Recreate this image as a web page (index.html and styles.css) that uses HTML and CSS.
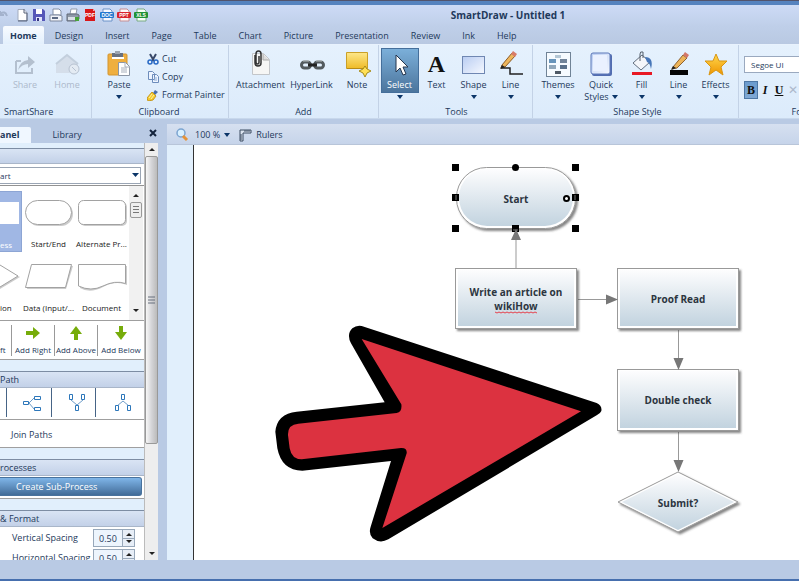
FILE: index.html
```html
<!DOCTYPE html>
<html lang="en">
<head>
<meta charset="utf-8">
<title>SmartDraw - Untitled 1</title>
<link rel="stylesheet" href="styles.css">
</head>
<body>
<div class="window">
  <header class="titlebar">
    <div class="quickbar">
      <button class="quick quick-cut" aria-label="Undo"><svg width="10" height="14"><path d="M0 6Q5 2 7 8M0 3v4h4" fill="none" stroke="#a3b2cc" stroke-width="2"/></svg></button>
      <button class="quick" aria-label="New"><svg width="14" height="14"><path d="M3 1.500h6l3 3v8H3z" fill="#fff" stroke="#a2abbd"/><path d="M9 1v4h3M12 5v8H3" fill="none" stroke="#566179"/></svg></button>
      <button class="quick" aria-label="Save"><svg width="14" height="14"><path d="M1 1h10l2 2v10H1z" fill="#5557b8"/><path d="M4 1h6v5H4z" fill="#fff"/><path d="M4 9h6v4H4z" fill="#dfe3fb"/><path d="M5 10h2v3H5z" fill="#34357e"/></svg></button>
      <button class="quick" aria-label="Print preview"><svg width="14" height="14"><path d="M4 1h6l2 2v4H4z" fill="#fff" stroke="#8390a6"/><path d="M1 7h9l3 1v5H1z" fill="#f1f3f8" stroke="#7c879d"/><path d="M3 10h6" stroke="#5d6b85" stroke-width="2"/></svg></button>
      <button class="quick" aria-label="Print"><svg width="14" height="14"><path d="M5 1h6l-1 5H4z" fill="#fff" stroke="#929bab"/><path d="M1 6h10l2 1v4l-3 2H1z" fill="#8f99a8" stroke="#626b79"/><path d="M2 9h7v3H2z" fill="#d9dfe7"/><path d="M9 9h4v4H9z" fill="#48a338"/></svg></button>
      <button class="quick" aria-label="Export PDF"><svg width="14" height="14"><path d="M2 1h8l2 2v10H2z" fill="#d91618"/><path d="M10 1v2h2" fill="#f7aaaa"/><text x="7" y="9" class="tag">PDF</text></svg></button>
      <button class="quick" aria-label="Export DOC"><svg width="14" height="14"><path d="M3 1h7l2 2v10H3z" fill="#f5f9ff" stroke="#6a91c7"/><rect y="4" width="14" height="6" rx="1" fill="#2379cf"/><text x="7" y="9" class="tag">DOC</text></svg></button>
      <button class="quick" aria-label="Export PPT"><svg width="14" height="14"><path d="M3 1h7l2 2v10H3z" fill="#fff7f7" stroke="#c48d93"/><rect y="4" width="14" height="6" rx="1" fill="#d9242c"/><text x="7" y="9" class="tag">PPT</text></svg></button>
      <button class="quick" aria-label="Export XLS"><svg width="14" height="14"><path d="M3 1h7l2 2v10H3z" fill="#f6fff6" stroke="#79a984"/><rect y="4" width="14" height="6" rx="1" fill="#219235"/><text x="7" y="9" class="tag">XLS</text></svg></button>
    </div>
    <h1 class="title">SmartDraw - Untitled 1</h1>
  </header>

  <nav class="tabs">
    <button class="tab tab-active">Home</button>
    <button class="tab">Design</button>
    <button class="tab">Insert</button>
    <button class="tab">Page</button>
    <button class="tab">Table</button>
    <button class="tab">Chart</button>
    <button class="tab">Picture</button>
    <button class="tab">Presentation</button>
    <button class="tab">Review</button>
    <button class="tab">Ink</button>
    <button class="tab">Help</button>
  </nav>

  <div class="ribbon">
    <section class="group group-share">
      <div class="tools">
        <button class="tool mid" disabled><svg width="28" height="28"><path d="M5 11H5v12h16v-5M5 11h5" fill="none" stroke="#b4c0cf" stroke-width="2"/><path d="M7 20Q9 11 17 10V6l7 6-7 6v-4Q11 14 7 20z" fill="#b4c0cf"/></svg>Share</button>
        <button class="tool mid" disabled><svg width="28" height="28"><path d="M3 14L14 5l11 9v9H3z" fill="#d5deea"/><path d="M3 14L14 5l11 9" fill="none" stroke="#c3cfdd" stroke-width="2"/><circle cx="21" cy="19" r="5" fill="#e4ebf3" stroke="#b7c2d1"/><path d="M19 17l4 4" stroke="#b7c2d1"/></svg>Home</button>
      </div>
      <h2>SmartShare</h2>
    </section>
    <section class="group group-clipboard">
      <div class="tools">
        <button class="tool mid"><svg width="28" height="28"><rect x="3" y="4" width="19" height="21" rx="1" fill="#efaf3f" stroke="#d39530"/><rect x="7" y="3" width="11" height="4" fill="#687180"/><path d="M10 1h5v3h-5z" fill="#9ca5b2"/><path d="M7 7h12v2H7z" fill="#fff"/><path d="M13.500 12.500h7l4 4v9h-11z" fill="#fff" stroke="#8c96a5"/><path d="M20 12v5h5M16 18h6M16 20h6M16 22h6" fill="none" stroke="#a7afbb"/></svg>Paste<i class="caret"></i></button>
        <div class="stack">
          <button class="line-tool"><svg width="12" height="12"><path d="M3 1l4 7M9 1L5 8" stroke="#39496a" stroke-width="2"/><circle cx="3" cy="9" r="2" fill="none" stroke="#2869c5" stroke-width="1.500"/><circle cx="9" cy="9" r="2" fill="none" stroke="#2869c5" stroke-width="1.500"/></svg>Cut</button>
          <button class="line-tool"><svg width="12" height="12"><path d="M1.500.500h4l2 2v6h-6zM5.500 3.500h4l2 2v6h-6z" fill="#edf4ff" stroke="#6d8cbb"/><path d="M7 7h3M7 9h3" stroke="#93aed4"/></svg>Copy</button>
          <button class="line-tool"><svg width="12" height="12"><path d="M8 1l3 2-3 3-2-2z" fill="#4b6fa8"/><path d="M5 3l4 4-3 4-5 1-1-3z" fill="#f5c92c" stroke="#c79a1f"/><path d="M2 9l3-4M4 10l3-4" stroke="#fff3a6"/></svg>Format Painter</button>
        </div>
      </div>
      <h2>Clipboard</h2>
    </section>
    <section class="group group-add">
      <div class="tools">
        <button class="tool wide"><svg width="28" height="28"><path d="M5.500 3.500h11l6 6v15h-17z" fill="#f6f6f5" stroke="#c3c6ca"/><path d="M16 4v6h6" fill="#ddd" stroke="#aaa"/><path d="M8 5v8q0 3 3 3t3-3V4q0-3-2.500-3T9 4v8q0 2 1.500 2t1.500-2V6" fill="none" stroke="#333" stroke-width="1.500"/></svg>Attachment</button>
        <button class="tool wide"><svg width="28" height="28"><rect x="3.500" y="12" width="9" height="6" rx="3" fill="none" stroke="#535a5e" stroke-width="3"/><rect x="16.500" y="12" width="9" height="6" rx="3" fill="none" stroke="#535a5e" stroke-width="3"/><path d="M10 15h9" stroke="#222" stroke-width="3"/><path d="M5 11h6M18 11h6" stroke="#b8bebf"/></svg>HyperLink</button>
        <button class="tool slim"><svg width="28" height="28"><defs><linearGradient id="note" x2="0" y2="1"><stop stop-color="#fde78a"/><stop offset="1" stop-color="#efbb27"/></linearGradient></defs><path d="M3.500 2.500h21v16h-21z" fill="url(#note)" stroke="#caa027"/><path d="M4 18h20v1H4z" fill="#b88b17"/><path d="M22 16l2 3 4 2-4 2-2 4-2-4-4-2 4-2z" fill="#ffe057" stroke="#a58a19"/></svg>Note</button>
      </div>
      <h2>Add</h2>
    </section>
    <section class="group group-tools">
      <div class="tools">
        <button class="tool narrow"><span class="face pressed"><svg width="28" height="28"><path d="M10 5v17l4-4 3 7 3-1-3-7h5z" fill="#fff" stroke="#24344c"/></svg>Select</span><i class="caret"></i></button>
        <button class="tool narrow"><span class="letter">A</span>Text</button>
        <button class="tool narrow"><svg width="28" height="28"><defs><linearGradient id="box" x2="1" y2="1"><stop stop-color="#b9cdf2"/><stop offset="1" stop-color="#f6f9ff"/></linearGradient></defs><rect x="2.500" y="6.500" width="22" height="17" fill="url(#box)" stroke="#6f87b2"/></svg>Shape<i class="caret"></i></button>
        <button class="tool narrow"><svg width="28" height="28"><path d="M5 15L15 3l3 3L8 17l-4 1z" fill="#eeb65c" stroke="#8d5b25"/><path d="M14 4l2-3 4 3-2 3z" fill="#d77b68"/><path d="M4 18h9v6h13" fill="none" stroke="#222" stroke-width="1.500"/><path d="M5 15l3 2-5 2z" fill="#222"/></svg>Line<i class="caret"></i></button>
      </div>
      <h2>Tools</h2>
    </section>
    <section class="group group-style">
      <div class="tools">
        <button class="tool mid"><svg width="28" height="28"><rect x="2.500" y="2.500" width="24" height="24" fill="#f6fbff" stroke="#708396"/><path d="M11 5h6v3h-6z" fill="#b4c7d5"/><path d="M5 9h7v4H5z" fill="#6794ba"/><path d="M16 9h7v4h-7z" fill="#71849a"/><path d="M5 15h7v4H5z" fill="#90a7ba"/><path d="M16 15h7v4h-7z" fill="#5a718b"/><path d="M11 21h6v3h-6z" fill="#4e5965"/></svg>Themes<i class="caret"></i></button>
        <button class="tool roomy"><svg width="28" height="28"><rect x="5" y="4" width="20" height="22" rx="2" fill="#526db0"/><rect x="4" y="3" width="19" height="21" rx="2" fill="url(#box)" stroke="#5d78b9"/><path d="M6 5h14v16H6z" fill="#eaf1ff"/></svg>Quick<span class="sub">Styles <i class="caret"></i></span></button>
        <button class="tool narrow"><svg width="28" height="28"><path d="M5 13L14 5l8 7-9 8z" fill="#f4f6fa" stroke="#636f80"/><path d="M12 11V4q0-3 3-2v6" fill="none" stroke="#555e6b"/><path d="M17 7q9 0 6 12-1-6-4-7z" fill="#4776b8"/><path d="M4 22h20v3H4z" fill="#e81824"/></svg>Fill<i class="caret"></i></button>
        <button class="tool narrow"><svg width="28" height="28"><path d="M8 17L18 5l4 3-10 10-5 1z" fill="#edb459" stroke="#8e612f"/><path d="M18 5l2-3 4 3-2 3z" fill="#d37769"/><path d="M8 16l3 2-5 2z" fill="#222"/><path d="M5 20h18v5H5z" fill="#060606"/></svg>Line<i class="caret"></i></button>
        <button class="tool narrow"><svg width="28" height="28"><defs><linearGradient id="star" x2="0" y2="1"><stop stop-color="#ffd84e"/><stop offset="1" stop-color="#ef9500"/></linearGradient></defs><path d="M14 4l3 7h8l-6 6 2 8-7-5-7 5 2-8-6-6h8z" fill="url(#star)" stroke="#d99613"/></svg>Effects<i class="caret"></i></button>
      </div>
      <h2>Shape Style</h2>
    </section>
    <section class="group group-font">
      <div class="font-tools">
        <input class="font-name" aria-label="Font" value="Segoe UI">
        <div class="font-row">
          <button class="fmt fmt-on"><b>B</b></button>
          <button class="fmt"><b><em>I</em></b></button>
          <button class="fmt"><b><u>U</u></b></button>
          <button class="fmt fmt-off">✕</button>
        </div>
      </div>
      <h2>Font</h2>
    </section>
  </div>

  <main class="work">
    <aside class="side">
      <div class="side-tabs">
        <button class="side-tab side-on">anel</button>
        <button class="side-tab">Library</button>
        <button class="close" aria-label="Close panel"><svg width="8" height="8"><path d="M1 1l6 6M7 1L1 7" stroke="#14243d" stroke-width="2"/></svg></button>
      </div>
      <div class="side-body">
        <div class="side-content">
          <div class="head head-first"></div>
          <div class="picker">
            <select aria-label="Library"><option>art</option></select>
            <svg class="picker-arrow" width="7" height="4"><path d="M0 0h7L3.500 4z" fill="#0b3568"/></svg>
          </div>
          <div class="shapes">
            <div class="shape-grid">
              <button class="shape shape-on"><svg width="20" height="34"><path d="M0 5h19v22H0z" fill="#fff"/></svg>ess</button>
              <button class="shape"><svg width="52" height="34"><rect x="4" y="6" width="46" height="24" rx="12" class="soft"/><rect x="2.500" y="4.500" width="46" height="24" rx="12" class="sym"/></svg>Start/End</button>
              <button class="shape"><svg width="52" height="34"><rect x="4" y="6" width="47" height="24" rx="5" class="soft"/><rect x="2.500" y="4.500" width="47" height="24" rx="5" class="sym"/></svg>Alternate Pr...</button>
              <button class="shape"><svg width="20" height="34"><path d="M0 7l20 10L0 29" class="soft"/><path d="M0 5l18 11L0 27" class="sym"/></svg>ion</button>
              <button class="shape"><svg width="52" height="34"><path d="M9 6h41l-7 23H4z" class="soft"/><path d="M8.500 4.500h40l-6 23h-40z" class="sym"/></svg>Data (Input/...</button>
              <button class="shape"><svg width="52" height="34"><path d="M4 6h47v19Q40 20 27 27T4 28z" class="soft"/><path d="M2.500 4.500h47v19Q39 20 27 26T2.500 26z" class="sym"/></svg>Document</button>
            </div>
            <div class="mini-scroll"><i class="up"></i><span class="mini-thumb"></span><i class="down"></i></div>
          </div>
          <div class="adds">
            <button class="add">ft</button>
            <button class="add"><svg width="16" height="16"><path d="M1 6h7V2l7 6-7 6v-4H1z" fill="#76ac0a"/></svg>Add Right</button>
            <button class="add"><svg width="16" height="16"><path d="M6 15V9H2l6-8 6 8h-4v6z" fill="#76ac0a"/></svg>Add Above</button>
            <button class="add"><svg width="16" height="16"><path d="M6 1v6H2l6 8 6-8h-4V1z" fill="#76ac0a"/></svg>Add Below</button>
          </div>
          <div class="head">Path</div>
          <div class="paths">
            <span class="path"></span>
            <button class="path" aria-label="Split right"><svg width="20" height="20"><path d="M7 10l5-5M7 10l5 6" class="wire"/><path d="M1.500 8.500h5v3h-5zM12.500 3.500h6v3h-6zM12.500 14.500h6v3h-6z" class="knot"/></svg></button>
            <button class="path" aria-label="Split up"><svg width="20" height="20"><path d="M10 12L4 7M10 12l6-5" class="wire"/><path d="M2.500 1.500h3v5h-3zM14.500 1.500h3v5h-3zM8.500 12.500h3v5h-3z" class="knot"/></svg></button>
            <button class="path" aria-label="Split down"><svg width="20" height="20"><path d="M10 8l-6 5M10 8l6 5" class="wire"/><path d="M8.500 1.500h3v5h-3zM2.500 12.500h3v5h-3zM14.500 12.500h3v5h-3z" class="knot"/></svg></button>
          </div>
          <button class="join">Join Paths</button>
          <div class="head">rocesses</div>
          <div class="sub-wrap"><button class="sub-process">Create Sub-Process</button></div>
          <div class="head">&amp; Format</div>
          <div class="spacing">
            <label class="space-row"><span>Vertical Spacing</span><input value="0.50"><span class="spin"><i class="up"></i><i class="down"></i></span></label>
            <label class="space-row"><span>Horizontal Spacing</span><input value="0.50"><span class="spin"><i class="up"></i><i class="down"></i></span></label>
          </div>
        </div>
        <div class="scroll"><span class="scroll-end"><i class="up"></i></span><span class="thumb"><svg width="7" height="8"><path d="M0 1h7M0 4h7M0 7h7" stroke="#666f7c"/></svg></span><span class="scroll-end scroll-low"><i class="down"></i></span></div>
      </div>
    </aside>

    <section class="doc">
      <div class="doc-bar">
        <svg width="14" height="14"><circle cx="6" cy="5" r="4" fill="#d8f0ff" stroke="#7ba4d0" stroke-width="1.500"/><path d="M8 8l4 4" stroke="#e59338" stroke-width="3"/></svg>
        <button class="bar-button">100 % <i class="caret"></i></button>
        <button class="bar-button"><svg width="13" height="13"><path d="M1 1h11v3H4v8H1z" fill="#dce4ef" stroke="#3b4a60"/><path d="M6 1v2M8 1v2M10 1v2M1 6h2M1 8h2M1 10h2" stroke="#3b4a60"/></svg>Rulers</button>
      </div>
      <div class="page">
        <svg class="diagram" width="605" height="415" viewBox="194 145 605 415">
          <defs>
            <linearGradient id="steel" x2="0" y2="1"><stop stop-color="#fdfdfe"/><stop offset="1" stop-color="#c2d3df"/></linearGradient>
            <filter id="shadow" x="-10%" y="-10%" width="125%" height="130%"><feDropShadow dx="2" dy="2" stdDeviation="1" flood-color="#444" flood-opacity=".65"/></filter>
          </defs>
          <g stroke="#999" fill="none"><path d="M516 269v-30M578 299.500h30M678.500 330v30M678.500 432v30"/></g>
          <g filter="url(#shadow)">
            <rect x="456.500" y="167.500" width="119" height="61" rx="30" fill="#fff" stroke="#999"/>
            <rect x="455.500" y="268.500" width="121" height="60" fill="#fff" stroke="#999"/>
            <rect x="617.500" y="268.500" width="121" height="60" fill="#fff" stroke="#999"/>
            <rect x="617.500" y="369.500" width="121" height="61" fill="#fff" stroke="#999"/>
            <path d="M678 472l60 30-60 30-60-30z" fill="#fff" stroke="#999"/>
          </g>
          <g fill="url(#steel)">
            <rect x="459" y="169" width="114" height="57" rx="28"/>
            <rect x="458" y="270" width="116" height="56"/>
            <rect x="620" y="270" width="116" height="56"/>
            <rect x="620" y="371" width="116" height="57"/>
            <path d="M678 474l56 28-56 28-56-28z"/>
          </g>
          <path d="M452 164h7v7h-7zM572 164h7v7h-7zM452 194h7v7h-7zM572 194h7v7h-7zM452 225h7v7h-7zM512 225h7v7h-7zM572 225h7v7h-7z"/>
          <path d="M516 229l-5 11h10zM618 299.500l-12-5v10zM678.500 370l-5-12h10zM678.500 472l-5-12h10z" fill="#777"/>
          <circle cx="515.500" cy="167.500" r="3.500"/>
          <circle cx="566.500" cy="198.500" r="2.500" fill="#fff" stroke="#000" stroke-width="2"/>
          <path d="M513 230h5M456 195v5M575 195v5" stroke="#777"/>
          <path d="M495 312l2 1 2-1 2 1 2-1 2 1 2-1 2 1 2-1 2 1 2-1 2 1 2-1 2 1 2-1 2 1 2-1 2 1 2-1 2 1 2-1 2 1" fill="none" stroke="#e6404c"/>
          <g class="node-text">
            <text x="516" y="203">Start</text>
            <text x="516" y="296">Write an article on</text>
            <text x="516" y="310">wikiHow</text>
            <text x="678" y="303">Proof Read</text>
            <text x="678" y="404">Double check</text>
            <text x="678" y="507">Submit?</text>
          </g>
          <g transform="translate(265 315) scale(.33333)">
            <path d="M290 33L995 264Q1012 272 1009 288 1006 296 995 301L370 673Q345 687 323 670 310 655 317 635L378 438 112 467Q50 467 37 400L31 350Q36 296 95 290L359 262 258 85Q244 58 262 40 274 30 290 33z"/>
            <path d="M290 72L948 289 352 639 425 415Q427 398 408 399L110 433Q80 433 74 400L69 360Q68 328 100 326L395 294Q412 290 409 268z" fill="#dc3240"/>
          </g>
        </svg>
      </div>
    </section>
  </main>
  <footer class="status"></footer>
</div>
</body>
</html>
```
FILE: styles.css
```css
* { box-sizing: border-box; }
body {
  margin: 0;
  font: 9px/12px "Open Sans", "Noto Sans", sans-serif;
  color: #1e395b;
}
button, input, select { font: inherit; color: inherit; }
button { background: none; border: 0; padding: 0; margin: 0; }
svg { display: block; flex: none; }
i { display: block; width: 0; height: 0; }
h1, h2 { margin: 0; }

.window {
  height: 100vh;
  display: flex;
  flex-direction: column;
  overflow: hidden;
  background: #b9cae4;
  border-top: 1px solid #52546c;
  border-bottom: 2px solid #466fae;
}
.titlebar {
  height: 25px;
  flex: none;
  display: flex;
  align-items: center;
  padding-bottom: 2px;
  border-top: 4px solid #5583bf;
  background: linear-gradient(#cddbf6, #bfcfe9);
}
.quickbar { display: flex; width: 217px; flex: none; }
.quick { width: 17px; display: flex; justify-content: center; }
.quick-cut { width: 13px; justify-content: flex-start; }
.tag { font: bold 5px "Liberation Sans", sans-serif; fill: #fff; text-anchor: middle; }
.title { flex: 1; text-align: center; font-size: 10px; font-weight: 700; }

.tabs { display: flex; height: 18px; flex: none; padding-left: 3px; background: linear-gradient(#bfcfe9, #b9c9e2); }
.tab { padding: 2px 11px 0; white-space: nowrap; }
.tab-active { padding: 2px 7px 0; background: linear-gradient(#f8fbff, #e3f0fd); border-radius: 2px 2px 0 0; font-weight: 700; }

.ribbon {
  display: flex;
  flex: none;
  height: 75px;
  background: linear-gradient(#e5f1fd, #dcebfb);
  border-top: 1px solid #e8f2fd;
  border-bottom: 1px solid #c8d8ec;
  overflow: hidden;
}
.group {
  flex: none;
  display: flex;
  flex-direction: column;
  justify-content: space-between;
  border-right: 1px solid #c3d2e6;
}
.group h2 { font-size: 9px; font-weight: 400; text-align: center; line-height: 13px; }
.group-share { width: 92px; padding-left: 4px; }
.group-share h2 { text-align: left; }
.group-clipboard { width: 137px; padding-left: 6px; }
.group-clipboard h2 { padding-right: 8px; }
.group-add { width: 150px; padding-left: 6px; }
.group-add h2 { padding-right: 6px; }
.group-tools { width: 154px; padding-left: 2px; }
.group-style { width: 206px; padding-left: 4px; }
.group-font { flex: 1 0 119px; padding-left: 5px; border-right: 0; }
.tools { display: flex; align-items: flex-start; padding-top: 3px; }
.tool { display: flex; flex-direction: column; align-items: center; padding-top: 2px; white-space: nowrap; }
.tool:disabled { color: #adb9cb; }
.tool > svg, .face > svg { margin-bottom: 1px; }
.mid { width: 42px; }
.roomy { width: 44px; }
.wide { width: 51px; }
.slim { width: 40px; }
.narrow { width: 37px; }
.face { display: flex; flex-direction: column; align-items: center; }
.pressed {
  width: 38px;
  height: 45px;
  margin-top: -2px;
  padding-top: 1px;
  color: #fff;
  border: 1px solid #456f9b;
  background: linear-gradient(#7bafd9, #4c759d);
}
.letter { font: bold 24px/28px "Liberation Serif", serif; color: #111; height: 29px; }
.caret { display: inline-block; border: 3px solid transparent; border-top: 4px solid #0b3568; border-bottom: 0; }
.tool > .caret { margin-top: 4px; }
.tool > .pressed + .caret { margin-top: 2px; }
.sub { display: flex; gap: 3px; align-items: center; }
.stack { display: flex; flex-direction: column; gap: 6px; padding: 5px 0 0 7px; }
.line-tool { display: flex; gap: 3px; align-items: center; white-space: nowrap; }

.font-tools { padding-top: 11px; }
.font-name { display: block; width: 100px; height: 17px; border: 1px solid #9aa9bf; background: #fff; font-size: 8px; padding: 0 6px; }
.font-row { display: flex; padding-top: 8px; }
.fmt { width: 14px; height: 18px; font: 12px/16px "Liberation Serif", serif; color: #111; }
.fmt-on { background: linear-gradient(#6a9bce, #7fa8d4); border: 1px solid #4d77a5; }
.fmt-off { color: #adb9cb; }

.work { display: flex; flex: 1; min-height: 0; padding-top: 5px; }
.side { width: 158px; flex: none; display: flex; flex-direction: column; }
.side-tabs { display: flex; height: 19px; flex: none; align-items: flex-end; }
.side-tab { height: 16px; padding: 0 21px; }
.side-on { padding: 0 12px 0 0; background: #f0f7ff; font-weight: 700; border-radius: 0 2px 0 0; }
.close { margin: 0 1px 6px auto; }
.side-body { flex: 1; min-height: 0; display: flex; background: #e1effc; }
.side-content { flex: 1; min-width: 0; overflow: hidden; }
.head {
  height: 17px;
  margin-top: 11px;
  border-top: 1px solid #7d8da3;
  border-bottom: 1px solid #a9b6c9;
  background: linear-gradient(#d9e4f4, #c3d1e8);
  line-height: 16px;
}
.head-first { height: 16px; margin-top: 5px; }
.picker { background: #fff; height: 22px; padding: 3px 3px 2px 0; position: relative; border-bottom: 1px solid #929292; }
.picker select { appearance: none; display: block; width: 100%; height: 17px; border: 1px solid #9aa5b4; border-left: 0; background: #fff; font-size: 8px; padding: 0; border-radius: 0; }
.picker-arrow { position: absolute; right: 5px; top: 9px; }
.shapes { display: flex; background: #fff; height: 135px; border-bottom: 1px solid #9f9f9f; }
.shape-grid { flex: 1; min-width: 0; display: grid; grid-template-columns: 22px 53px 53px; grid-template-rows: 64px 64px; padding-top: 5px; }
.shape { display: flex; flex-direction: column; align-items: center; gap: 8px; padding-top: 5px; font-size: 8px; line-height: 12px; white-space: nowrap; color: #222; }
.shape-on { height: 61px; background: #a0b7e4; border: 1px solid #8da5d4; border-left: 0; color: #fff; }
.shape:first-child, .shape:nth-child(4) { align-items: flex-start; }
.sym { fill: #fff; stroke: #a2a2a2; }
.soft { fill: #ccc; }
.mini-scroll { width: 14px; margin-right: 1px; background: #f1f1f1; display: flex; flex-direction: column; align-items: center; padding: 8px 0; }
.up { border: 3px solid transparent; border-bottom: 3px solid #222; border-top: 0; }
.down { border: 3px solid transparent; border-top: 3px solid #222; border-bottom: 0; }
.mini-scroll .down { margin-top: auto; }
.mini-thumb { width: 12px; height: 16px; margin-top: 5px; border: 1px solid #999; border-radius: 2px; background: repeating-linear-gradient(#777 0 1px, #eee 1px 3px) center / 6px 8px no-repeat #eee; }
.adds { display: grid; grid-template-columns: 12px 43px 43px 1fr; height: 39px; padding: 4px 0; background: #fff; border-bottom: 1px solid #9f9f9f; }
.add { display: flex; flex-direction: column; align-items: center; justify-content: flex-end; font-size: 8px; white-space: nowrap; border-right: 1px solid #999; }
.add svg { margin-bottom: 3px; }
.add:first-child { align-items: flex-start; }
.add:last-child, .path:last-child { border-right: 0; }
.paths { display: grid; grid-template-columns: 7px 45px 44px 1fr; height: 32px; background: #fff; border-bottom: 1px solid #9f9f9f; padding-bottom: 2px; }
.path { display: flex; align-items: center; justify-content: center; border-right: 1px solid #466486; }
.path svg { margin-left: 6px; }
.knot { fill: #fff; stroke: #2d77ba; }
.wire { fill: none; stroke: #6f9dc9; }
.join { display: block; width: 100%; height: 28px; padding: 3px 0 0 11px; text-align: left; background: #fff; border-bottom: 1px solid #9f9f9f; }
.sub-wrap { height: 23px; background: #fff; padding: 1px 2px 2px 0; border-bottom: 1px solid #9f9f9f; }
.sub-process { display: block; width: 100%; height: 19px; padding: 0 45px 0 16px; text-align: left; white-space: nowrap; color: #fff; background: linear-gradient(#7fb5e8, #426c98); border-radius: 0 3px 3px 0; border: 1px solid #48729d; border-left: 0; }
.spacing { background: #fff; padding-top: 2px; }
.space-row { display: flex; height: 18px; margin-bottom: 2px; padding: 0 9px 0 12px; align-items: center; white-space: nowrap; }
.space-row > span:first-child { flex: 1 0 auto; }
.space-row input { width: 30px; height: 18px; border: 1px solid #98a8ba; background: #edf5fd; text-align: center; padding: 0; }
.spin { width: 12px; height: 18px; display: flex; flex-direction: column; align-items: center; justify-content: space-evenly; border: 1px solid #98a8ba; border-left: 0; background: linear-gradient(#e7eef7 8px, #98a8ba 8px 9px, #e7eef7 9px); }

.scroll { width: 14px; flex: none; display: flex; flex-direction: column; background: #eee; border-left: 1px solid #bbb; }
.scroll-end { height: 13px; flex: none; display: flex; align-items: center; justify-content: center; }
.scroll-low { margin-top: auto; }
.thumb { flex: 0 1 288px; display: flex; align-items: center; justify-content: center; background: linear-gradient(90deg, #f7f7f7, #d5d5d8 50%, #bbb); border: 1px solid #999; border-radius: 2px; }

.doc { flex: 1; min-width: 0; margin-left: 9px; display: flex; flex-direction: column; }
.doc-bar { height: 21px; flex: none; display: flex; align-items: center; gap: 6px; padding: 2px 0 0 8px; background: linear-gradient(#d6e0f0, #c6d4ea); border-bottom: 1px solid #b8c5d9; }
.bar-button { display: flex; align-items: center; gap: 4px; white-space: nowrap; }
.bar-button + .bar-button { margin-left: 3px; }
.page { flex: 1; min-height: 0; border-left: 26px solid #e1effc; background: linear-gradient(90deg, #333 1px, #fff 1px); overflow: hidden; padding-left: 1px; }
.node-text { font: bold 10px "Open Sans", sans-serif; fill: #2c3540; text-anchor: middle; }
.status { height: 19px; flex: none; background: #b9cae4; }
```
